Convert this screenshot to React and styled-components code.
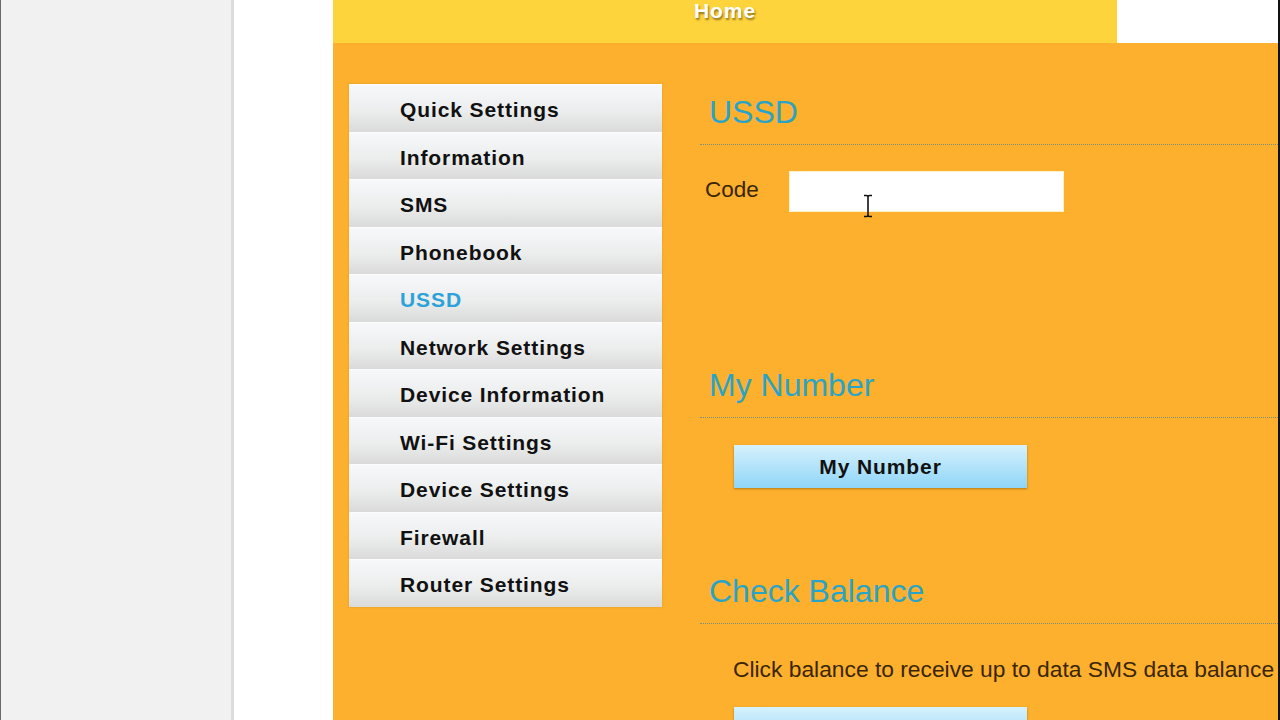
import React from "react"
import styled, { createGlobalStyle } from "styled-components"

const colors = {
  orange: "#fdb02d",
  yellow: "#fed43c",
  heading: "#2aa4c6",
  active: "#2ba3d9",
  text: "#3a2604",
  menuText: "#111111",
}

const menu = [
  "Quick Settings",
  "Information",
  "SMS",
  "Phonebook",
  "USSD",
  "Network Settings",
  "Device Information",
  "Wi-Fi Settings",
  "Device Settings",
  "Firewall",
  "Router Settings",
]

export default function App() {
  return (
    <>
      <Global />
      <Page>
        <LeftPanel />
        <Gutter />
        <Main>
          <TopBar>
            <HomeTab>Home</HomeTab>
            <TopBlank />
          </TopBar>
          <Body>
            <Menu>
              {menu.map((item) => (
                <MenuItem key={item} active={item === "USSD"}>
                  {item}
                </MenuItem>
              ))}
            </Menu>
            <Content>
              <Section>
                <Heading>USSD</Heading>
                <CodeRow>
                  <Label>Code</Label>
                  <InputWrap>
                    <CodeInput type="text" />
                    <Cursor viewBox="0 0 10 24" width="10" height="24">
                      <path
                        d="M1 1.5h2.5c1 0 1.5.5 1.5 1.5M9 1.5H6.5C5.5 1.5 5 2 5 3v18c0 1-.5 1.5-1.5 1.5H1M5 21c0 1 .5 1.5 1.5 1.5H9"
                        fill="none"
                        stroke="#111"
                        strokeWidth="1.6"
                      />
                    </Cursor>
                  </InputWrap>
                </CodeRow>
              </Section>
              <Section gap={145}>
                <Heading>My Number</Heading>
                <BlueButton>My Number</BlueButton>
              </Section>
              <Section gap={75}>
                <Heading>Check Balance</Heading>
                <Note>Click balance to receive up to data SMS data balance</Note>
                <BlueButton />
              </Section>
            </Content>
          </Body>
        </Main>
        <EdgeStrip />
      </Page>
    </>
  )
}

const Global = createGlobalStyle`
  html, body {
    margin: 0;
    padding: 0;
    height: 720px;
    overflow: hidden;
    background: #ffffff;
    font-family: "Liberation Sans", Arial, sans-serif;
  }
`

const Page = styled.div`
  display: flex;
  width: 1280px;
  height: 720px;
  overflow: hidden;
`

const LeftPanel = styled.div`
  width: 234px;
  flex-shrink: 0;
  background: #f1f1f1;
  border-left: 1px solid #6a6a6a;
  border-right: 3px solid #dcdcdc;
  box-sizing: border-box;
`

const Gutter = styled.div`
  width: 99px;
  flex-shrink: 0;
  background: #ffffff;
`

const Main = styled.div`
  flex: 1;
  display: flex;
  flex-direction: column;
  min-width: 0;
  overflow: hidden;
  background: ${colors.orange};
`

const EdgeStrip = styled.div`
  width: 2px;
  flex-shrink: 0;
  background: #111111;
`

const TopBar = styled.div`
  display: flex;
  flex-shrink: 0;
  height: 43px;
`

const HomeTab = styled.div`
  width: 784px;
  background: ${colors.yellow};
  color: #ffffff;
  font-weight: bold;
  font-size: 21px;
  letter-spacing: 0.9px;
  text-align: center;
  line-height: 22px;
  text-shadow: 1px 2px 2px rgba(60, 40, 0, 0.55);
`

const TopBlank = styled.div`
  flex: 1;
  background: #ffffff;
`

const Body = styled.div`
  flex: 1;
  min-height: 0;
  display: flex;
  align-items: flex-start;
  padding: 41px 0 0 16px;
`

const Menu = styled.div`
  width: 313px;
  flex-shrink: 0;
  display: flex;
  flex-direction: column;
  box-shadow: 0 0 2px rgba(120, 80, 0, 0.25);
`

const MenuItem = styled.div`
  height: 47.5px;
  display: flex;
  align-items: center;
  padding: 4px 0 0 51px;
  box-sizing: border-box;
  background: linear-gradient(#f6f8fa 0%, #eceded 55%, #dadada 100%);
  border-top: 1px solid #fbfcfd;
  color: ${(p) => (p.active ? colors.active : colors.menuText)};
  font-weight: bold;
  font-size: 21px;
  letter-spacing: 0.9px;
`

const Content = styled.div`
  flex: 1;
  min-width: 0;
  margin-left: 38px;
  display: flex;
  flex-direction: column;
`

const Section = styled.div`
  display: flex;
  flex-direction: column;
  flex-shrink: 0;
  margin-top: ${(p) => (p.gap ? `${p.gap}px` : "0")};
`

const Heading = styled.div`
  height: 61px;
  padding: 0 0 4px 9px;
  display: flex;
  align-items: center;
  font-size: 32px;
  color: ${colors.heading};
  border-bottom: 1px dotted #7d8f76;
  box-sizing: border-box;
  width: 1000px;
`

const CodeRow = styled.div`
  display: flex;
  align-items: center;
  margin-top: 26px;
  padding-left: 5px;
`

const Label = styled.span`
  width: 84px;
  font-size: 22.5px;
  color: ${colors.text};
  margin-top: -4px;
`

const InputWrap = styled.div`
  position: relative;
`

const CodeInput = styled.input`
  width: 275px;
  height: 41px;
  box-sizing: border-box;
  border: 1px solid #fff1c8;
  background: #ffffff;
  outline: none;
  margin: 0;
  display: block;
`

const Cursor = styled.svg`
  position: absolute;
  left: 74px;
  top: 23px;
`

const BlueButton = styled.div`
  width: 293px;
  height: 43px;
  flex-shrink: 0;
  margin: 27px 0 0 34px;
  display: flex;
  align-items: center;
  justify-content: center;
  background: linear-gradient(#d6f1fc 0%, #b3e3fa 50%, #8fd5f8 100%);
  box-shadow: 0 1px 2px rgba(100, 70, 0, 0.5);
  color: #111111;
  font-weight: bold;
  font-size: 21px;
  letter-spacing: 0.9px;
`

const Note = styled.div`
  margin: 32px 0 0 33px;
  font-size: 22.8px;
  color: ${colors.text};
  white-space: nowrap;
  & + ${BlueButton} {
    margin-top: 24px;
  }
`
